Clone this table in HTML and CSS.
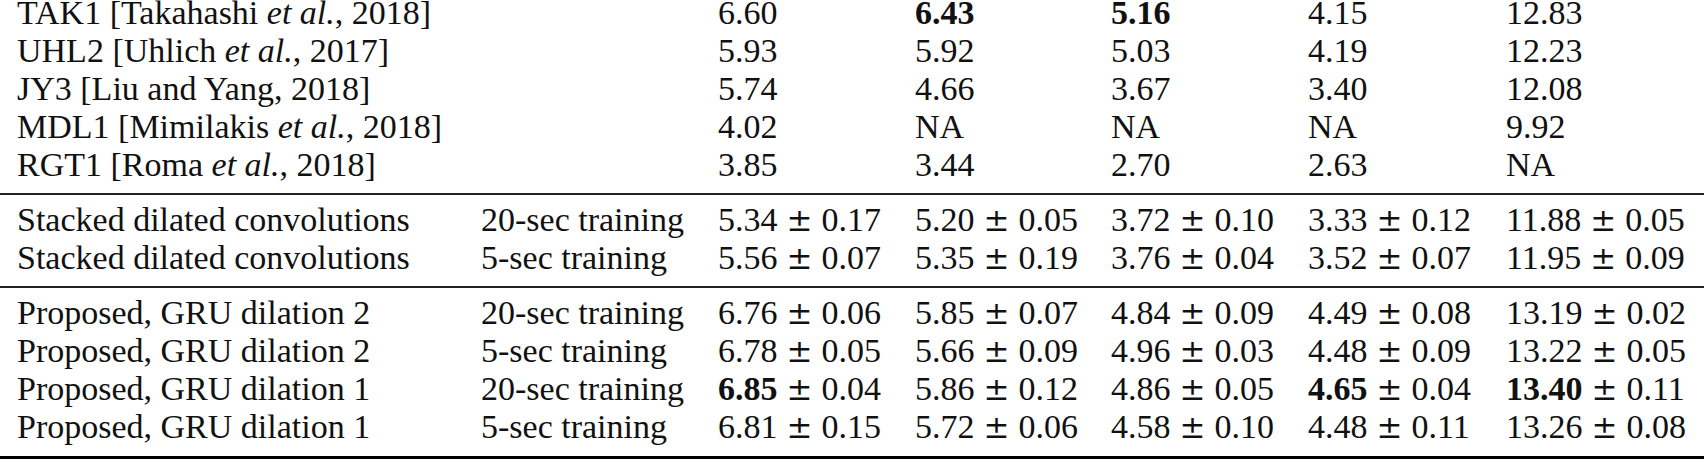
FILE: index.html
```html
<!DOCTYPE html>
<html lang="en">
<head>
    <meta charset="UTF-8">
    <meta name="viewport" content="width=device-width, initial-scale=1.0">
    <title>Separation Results</title>
    <link rel="stylesheet" href="styles.css">
</head>
<body>
    <div class="results">

        <!-- Challenge submissions -->
        <div class="group first">
            <span>TAK1 [Takahashi <i>et al.</i>, 2018]</span><span></span>
            <span>6.60</span><span><b>6.43</b></span><span><b>5.16</b></span><span>4.15</span><span>12.83</span>

            <span>UHL2 [Uhlich <i>et al.</i>, 2017]</span><span></span>
            <span>5.93</span><span>5.92</span><span>5.03</span><span>4.19</span><span>12.23</span>

            <span>JY3 [Liu and Yang, 2018]</span><span></span>
            <span>5.74</span><span>4.66</span><span>3.67</span><span>3.40</span><span>12.08</span>

            <span>MDL1 [Mimilakis <i>et al.</i>, 2018]</span><span></span>
            <span>4.02</span><span>NA</span><span>NA</span><span>NA</span><span>9.92</span>

            <span>RGT1 [Roma <i>et al.</i>, 2018]</span><span></span>
            <span>3.85</span><span>3.44</span><span>2.70</span><span>2.63</span><span>NA</span>
        </div>

        <!-- Baseline -->
        <div class="group">
            <span>Stacked dilated convolutions</span><span>20-sec training</span>
            <span class="val"><span>5.34</span><span class="pm">±</span><span>0.17</span></span>
            <span class="val"><span>5.20</span><span class="pm">±</span><span>0.05</span></span>
            <span class="val"><span>3.72</span><span class="pm">±</span><span>0.10</span></span>
            <span class="val"><span>3.33</span><span class="pm">±</span><span>0.12</span></span>
            <span class="val"><span>11.88</span><span class="pm">±</span><span>0.05</span></span>

            <span>Stacked dilated convolutions</span><span>5-sec training</span>
            <span class="val"><span>5.56</span><span class="pm">±</span><span>0.07</span></span>
            <span class="val"><span>5.35</span><span class="pm">±</span><span>0.19</span></span>
            <span class="val"><span>3.76</span><span class="pm">±</span><span>0.04</span></span>
            <span class="val"><span>3.52</span><span class="pm">±</span><span>0.07</span></span>
            <span class="val"><span>11.95</span><span class="pm">±</span><span>0.09</span></span>
        </div>

        <!-- Proposed -->
        <div class="group last">
            <span>Proposed, GRU dilation 2</span><span>20-sec training</span>
            <span class="val"><span>6.76</span><span class="pm">±</span><span>0.06</span></span>
            <span class="val"><span>5.85</span><span class="pm">±</span><span>0.07</span></span>
            <span class="val"><span>4.84</span><span class="pm">±</span><span>0.09</span></span>
            <span class="val"><span>4.49</span><span class="pm">±</span><span>0.08</span></span>
            <span class="val"><span>13.19</span><span class="pm">±</span><span>0.02</span></span>

            <span>Proposed, GRU dilation 2</span><span>5-sec training</span>
            <span class="val"><span>6.78</span><span class="pm">±</span><span>0.05</span></span>
            <span class="val"><span>5.66</span><span class="pm">±</span><span>0.09</span></span>
            <span class="val"><span>4.96</span><span class="pm">±</span><span>0.03</span></span>
            <span class="val"><span>4.48</span><span class="pm">±</span><span>0.09</span></span>
            <span class="val"><span>13.22</span><span class="pm">±</span><span>0.05</span></span>

            <span>Proposed, GRU dilation 1</span><span>20-sec training</span>
            <span class="val"><b>6.85</b><span class="pm">±</span><span>0.04</span></span>
            <span class="val"><span>5.86</span><span class="pm">±</span><span>0.12</span></span>
            <span class="val"><span>4.86</span><span class="pm">±</span><span>0.05</span></span>
            <span class="val"><b>4.65</b><span class="pm">±</span><span>0.04</span></span>
            <span class="val"><b>13.40</b><span class="pm">±</span><span>0.11</span></span>

            <span>Proposed, GRU dilation 1</span><span>5-sec training</span>
            <span class="val"><span>6.81</span><span class="pm">±</span><span>0.15</span></span>
            <span class="val"><span>5.72</span><span class="pm">±</span><span>0.06</span></span>
            <span class="val"><span>4.58</span><span class="pm">±</span><span>0.10</span></span>
            <span class="val"><span>4.48</span><span class="pm">±</span><span>0.11</span></span>
            <span class="val"><span>13.26</span><span class="pm">±</span><span>0.08</span></span>
        </div>

    </div>
</body>
</html>
```

FILE: styles.css
```css
/* Basic Reset */
* {
    margin: 0;
    padding: 0;
    box-sizing: border-box;
}

body {
    font-family: 'Liberation Serif', 'Times New Roman', serif;
    font-size: 34px;
    color: #111;
    background-color: #fff;
    overflow: hidden;
}

/* Table */
.results {
    width: 1704px;
}

.group {
    display: grid;
    grid-template-columns: 464px 237px 197px 196px 197px 198px auto;
    grid-auto-rows: 38px;
    line-height: 38px;
    padding: 6px 0 9px 17px;
    border-bottom: 2px solid #222;
    white-space: nowrap;
}

/* top of the table is cropped, rows sit a little higher */
.group.first {
    padding-top: 0;
    padding-bottom: 3px;
    line-height: 26px;
}

.group.last {
    padding-bottom: 10px;
    border-bottom: 3px solid #000;
}

.val {
    display: flex;
    align-items: baseline;
}

/* plus-minus sign, wider math glyph */
.pm {
    width: 44px;
    text-align: center;
    font-family: 'DejaVu Serif', serif;
    font-size: 31px;
    font-weight: 300;
}
```
